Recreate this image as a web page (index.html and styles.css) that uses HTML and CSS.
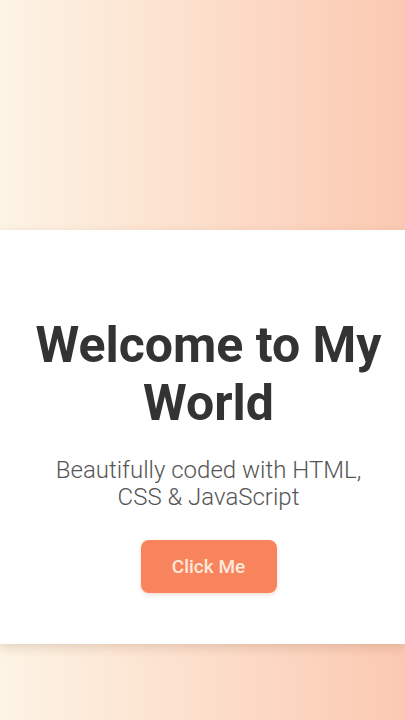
FILE: index.html
```html
<!DOCTYPE html>
<html lang="en">
<head>
<meta charset="utf-8">
<title>Welcome</title>
<link rel="stylesheet" href="styles.css">
</head>
<body>
<main class="page">
  <section class="card">
    <h1 class="title">Welcome to My World</h1>
    <p class="subtitle">Beautifully coded with HTML, CSS &amp; JavaScript</p>
    <button class="btn" type="button">Click Me</button>
  </section>
</main>
</body>
</html>
```
FILE: styles.css
```css
html, body {
  margin: 0;
  padding: 0;
}
body {
  width: 405px;
  height: 720px;
  overflow: hidden;
  background: linear-gradient(to right, #fdf4e5, #fbc9b2);
  font-family: Roboto, "Noto Sans", sans-serif;
}
.page {
  padding-top: 230px;
}
.card {
  background: #ffffff;
  box-shadow: 0 4px 10px rgba(120, 70, 40, 0.18);
  display: flex;
  flex-direction: column;
  align-items: center;
  text-align: center;
  padding: 86px 6px 51px 18px;
}
.title {
  margin: 0;
  font-size: 50px;
  line-height: 58px;
  font-weight: 700;
  color: #333333;
}
.subtitle {
  margin: 25px 0 0;
  max-width: 340px;
  font-size: 24px;
  line-height: 27px;
  font-weight: 300;
  color: #555555;
}
.btn {
  margin-top: 29px;
  width: 136px;
  height: 53px;
  border: none;
  border-radius: 8px;
  background: #f8845e;
  color: #fde8dc;
  font-family: Roboto, "Noto Sans", sans-serif;
  font-size: 19px;
  font-weight: 500;
  box-shadow: 0 2px 4px rgba(200, 90, 50, 0.2);
}
```
